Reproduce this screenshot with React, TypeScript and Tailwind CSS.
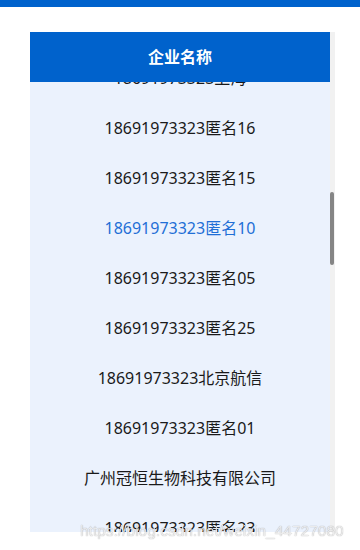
import React, { useLayoutEffect, useRef } from "react";

const names: string[] = (() => {
  const base = [
    "匿名30", "匿名29", "匿名28", "匿名27", "匿名26", "匿名24", "匿名22", "匿名21",
    "匿名20", "匿名19", "匿名18", "匿名17", "深圳", "杭州", "成都", "武汉",
    "匿名14", "匿名13", "匿名12", "匿名11", "南京", "上海",
    "匿名16", "匿名15", "匿名10", "匿名05", "匿名25", "北京航信", "匿名01",
    "__GZ__", "匿名23", "匿名09", "匿名08", "匿名07", "匿名06", "匿名04",
    "匿名03", "匿名02", "天津", "西安", "重庆", "苏州", "长沙", "青岛",
    "厦门", "宁波", "郑州", "济南", "合肥", "福州", "昆明", "沈阳",
    "大连", "哈尔滨", "长春", "南宁", "贵阳", "兰州", "太原", "石家庄",
    "南昌", "海口", "呼和浩特", "乌鲁木齐", "银川", "西宁", "拉萨",
  ];
  return base.map((s) => (s === "__GZ__" ? "广州冠恒生物科技有限公司" : "18691973323" + s));
})();

export default function App() {
  const ref = useRef<HTMLDivElement>(null);
  useLayoutEffect(() => {
    if (ref.current) ref.current.scrollTop = 1079;
  }, []);
  return (
    <div
      className="relative w-[360px] h-[550px] bg-white overflow-hidden"
      style={{ fontFamily: '"Noto Sans", "Noto Sans CJK SC", sans-serif' }}
    >
      <div className="h-[7px] bg-[#0062cc]" />
      <div className="pt-[25px] pl-[30px] flex">
        <div
          ref={ref}
          className="w-[300px] h-[500px] overflow-y-scroll bg-[#ebf2fd] [scrollbar-width:none] [&::-webkit-scrollbar]:hidden"
        >
          <div className="sticky top-0 z-10 h-[50px] bg-[#0062cc] flex items-center justify-center text-white text-[16px] font-semibold">
            企业名称
          </div>
          {names.map((n) => (
            <div
              key={n}
              className={
                "h-[50px] flex items-center justify-center text-[16px] " +
                (n === "18691973323匿名10" ? "text-[#1f6fd6]" : "text-[#1a1a1a]")
              }
            >
              {n}
            </div>
          ))}
        </div>
        <div className="relative w-[5px] h-[500px] bg-[#f1f1f1]">
          <div className="absolute left-0 top-[160px] w-[4px] h-[73px] rounded-[2px] bg-[#858585]" />
        </div>
      </div>
      <div
        className="absolute left-[80px] top-[519px] text-[15.5px] text-white/80 pointer-events-none whitespace-nowrap"
        style={{ fontFamily: '"Liberation Sans", Arial, sans-serif', textShadow: "0 0 1px rgba(0,0,0,0.45)" }}
      >
        https://blog.csdn.net/weixin_44727080
      </div>
    </div>
  );
}
